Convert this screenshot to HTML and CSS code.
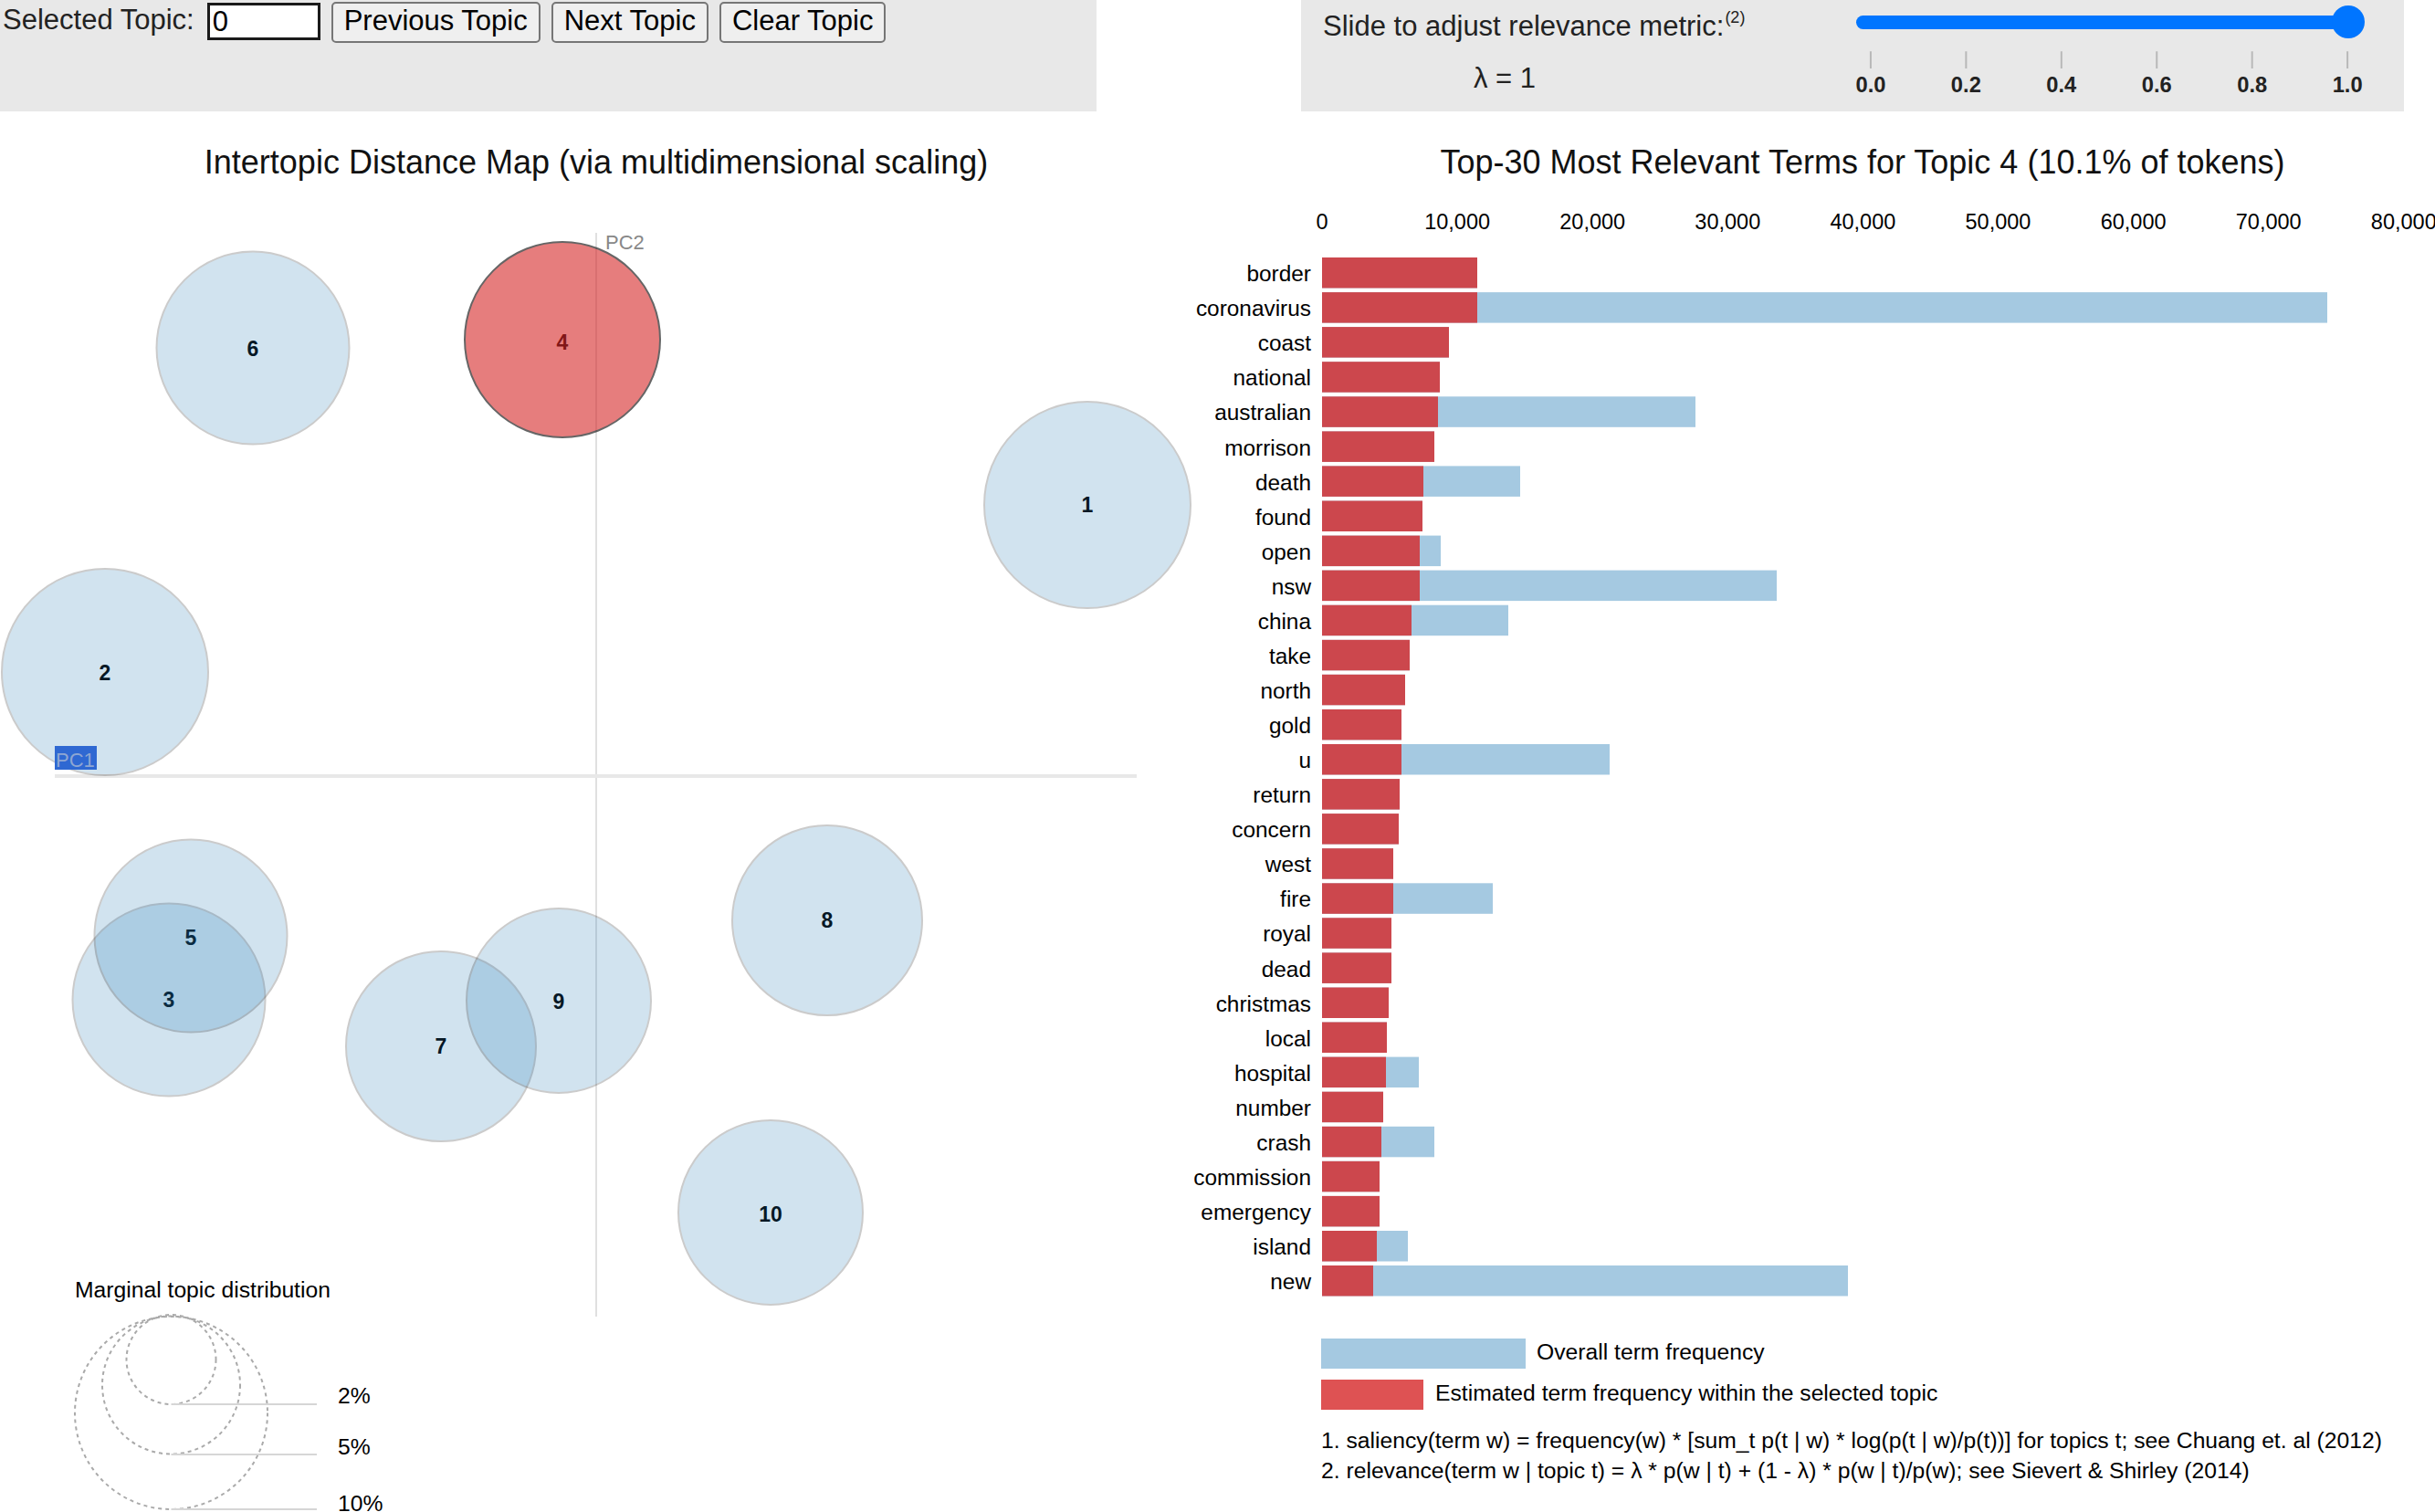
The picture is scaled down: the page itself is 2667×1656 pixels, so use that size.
FILE: index.html
```html
<!DOCTYPE html>
<html lang="en">
<head>
<meta charset="utf-8">
<title>LDAvis</title>
<link rel="stylesheet" href="styles.css">
</head>
<body>
<div class="controls">
  <div class="topic-panel">
    <span class="topic-label">Selected Topic:</span>
    <input class="topic-input" type="text" value="0">
    <button class="btn">Previous Topic</button>
    <button class="btn">Next Topic</button>
    <button class="btn">Clear Topic</button>
  </div>
  <div class="rel-panel">
    <div class="rel-text">
      <div class="rel-label">Slide to adjust relevance metric:<sup>(2)</sup></div>
      <div class="lambda">λ = 1</div>
    </div>
    <div class="slider">
      <div class="track"><div class="thumb"></div></div>
      <svg class="ticks" viewBox="0 0 560 91">
        <g class="tick-lines">
          <line x1="13" y1="24.5" x2="13" y2="43.5"/>
          <line x1="118.6" y1="24.5" x2="118.6" y2="43.5"/>
          <line x1="224.2" y1="24.5" x2="224.2" y2="43.5"/>
          <line x1="329.8" y1="24.5" x2="329.8" y2="43.5"/>
          <line x1="435.4" y1="24.5" x2="435.4" y2="43.5"/>
          <line x1="541" y1="24.5" x2="541" y2="43.5"/>
        </g>
        <g class="tick-text">
          <text x="13" y="70">0.0</text>
          <text x="118.6" y="70">0.2</text>
          <text x="224.2" y="70">0.4</text>
          <text x="329.8" y="70">0.6</text>
          <text x="435.4" y="70">0.8</text>
          <text x="541" y="70">1.0</text>
        </g>
      </svg>
    </div>
  </div>
</div>

<div class="charts">
  <svg class="map" viewBox="0 122 1310 1534">
    <text class="chart-title" x="653" y="190">Intertopic Distance Map (via multidimensional scaling)</text>
    <line class="axis-v" x1="653" y1="255" x2="653" y2="1442"/>
    <line class="axis-h" x1="60" y1="850" x2="1245" y2="850"/>
    <text class="pc" x="663" y="273">PC2</text>

    <g class="tlabels">
      <text x="1191" y="561">1</text>
      <text x="115" y="745">2</text>
      <text x="185" y="1103">3</text>
      <text x="616" y="383">4</text>
      <text x="209" y="1035">5</text>
      <text x="277" y="390">6</text>
      <text x="483" y="1154">7</text>
      <text x="906" y="1016">8</text>
      <text x="612" y="1105">9</text>
      <text x="844" y="1338">10</text>
    </g>
    <g>
      <circle class="topic" cx="1191" cy="553" r="113"/>
      <circle class="topic" cx="115" cy="736" r="113"/>
      <circle class="topic" cx="185" cy="1095" r="105.5"/>
      <circle class="topic sel" cx="616" cy="372" r="107"/>
      <circle class="topic" cx="209" cy="1025" r="105.5"/>
      <circle class="topic" cx="277" cy="381" r="105.5"/>
      <circle class="topic" cx="483" cy="1146" r="104"/>
      <circle class="topic" cx="906" cy="1008" r="104"/>
      <circle class="topic" cx="612" cy="1096" r="101"/>
      <circle class="topic" cx="844" cy="1328" r="101"/>
    </g>
    <rect class="pc1-sel" x="60" y="817" width="46" height="26"/>
    <text class="pc1" x="61" y="840">PC1</text>

    <text class="small" x="82" y="1421">Marginal topic distribution</text>
    <circle class="marg" cx="187.5" cy="1489" r="49"/>
    <circle class="marg" cx="187.5" cy="1517" r="75.5"/>
    <circle class="marg" cx="187.5" cy="1547.5" r="105.5"/>
    <line class="marg-line" x1="187.5" y1="1538" x2="347" y2="1538"/>
    <line class="marg-line" x1="187.5" y1="1593" x2="347" y2="1593"/>
    <line class="marg-line" x1="187.5" y1="1653" x2="347" y2="1653"/>
    <text class="small" x="370" y="1537">2%</text>
    <text class="small" x="370" y="1593">5%</text>
    <text class="small" x="370" y="1655">10%</text>
  </svg>

  <svg class="bars" viewBox="1310 122 1357 1534">
    <text class="chart-title" x="2040" y="190">Top-30 Most Relevant Terms for Topic 4 (10.1% of tokens)</text>
    <g class="xaxis">
      <text x="1448" y="251">0</text>
      <text x="1596.1" y="251">10,000</text>
      <text x="1744.2" y="251">20,000</text>
      <text x="1892.3" y="251">30,000</text>
      <text x="2040.4" y="251">40,000</text>
      <text x="2188.5" y="251">50,000</text>
      <text x="2336.6" y="251">60,000</text>
      <text x="2484.7" y="251">70,000</text>
      <text x="2632.8" y="251">80,000</text>
    </g>

    <g transform="translate(1448,282)"><rect class="ov" width="170" height="33.5"/><rect class="est" width="170" height="33.5"/><text class="term" x="-12" y="26.2">border</text></g>
    <g transform="translate(1448,320.1)"><rect class="ov" width="1101" height="33.5"/><rect class="est" width="170" height="33.5"/><text class="term" x="-12" y="26.2">coronavirus</text></g>
    <g transform="translate(1448,358.1)"><rect class="ov" width="139" height="33.5"/><rect class="est" width="139" height="33.5"/><text class="term" x="-12" y="26.2">coast</text></g>
    <g transform="translate(1448,396.2)"><rect class="ov" width="129" height="33.5"/><rect class="est" width="129" height="33.5"/><text class="term" x="-12" y="26.2">national</text></g>
    <g transform="translate(1448,434.3)"><rect class="ov" width="409" height="33.5"/><rect class="est" width="127" height="33.5"/><text class="term" x="-12" y="26.2">australian</text></g>
    <g transform="translate(1448,472.4)"><rect class="ov" width="123" height="33.5"/><rect class="est" width="123" height="33.5"/><text class="term" x="-12" y="26.2">morrison</text></g>
    <g transform="translate(1448,510.4)"><rect class="ov" width="217" height="33.5"/><rect class="est" width="111" height="33.5"/><text class="term" x="-12" y="26.2">death</text></g>
    <g transform="translate(1448,548.5)"><rect class="ov" width="110" height="33.5"/><rect class="est" width="110" height="33.5"/><text class="term" x="-12" y="26.2">found</text></g>
    <g transform="translate(1448,586.6)"><rect class="ov" width="130" height="33.5"/><rect class="est" width="107" height="33.5"/><text class="term" x="-12" y="26.2">open</text></g>
    <g transform="translate(1448,624.6)"><rect class="ov" width="498" height="33.5"/><rect class="est" width="107" height="33.5"/><text class="term" x="-12" y="26.2">nsw</text></g>
    <g transform="translate(1448,662.7)"><rect class="ov" width="204" height="33.5"/><rect class="est" width="98" height="33.5"/><text class="term" x="-12" y="26.2">china</text></g>
    <g transform="translate(1448,700.8)"><rect class="ov" width="96" height="33.5"/><rect class="est" width="96" height="33.5"/><text class="term" x="-12" y="26.2">take</text></g>
    <g transform="translate(1448,738.8)"><rect class="ov" width="91" height="33.5"/><rect class="est" width="91" height="33.5"/><text class="term" x="-12" y="26.2">north</text></g>
    <g transform="translate(1448,776.9)"><rect class="ov" width="87" height="33.5"/><rect class="est" width="87" height="33.5"/><text class="term" x="-12" y="26.2">gold</text></g>
    <g transform="translate(1448,815)"><rect class="ov" width="315" height="33.5"/><rect class="est" width="87" height="33.5"/><text class="term" x="-12" y="26.2">u</text></g>
    <g transform="translate(1448,853.1)"><rect class="ov" width="85" height="33.5"/><rect class="est" width="85" height="33.5"/><text class="term" x="-12" y="26.2">return</text></g>
    <g transform="translate(1448,891.1)"><rect class="ov" width="84" height="33.5"/><rect class="est" width="84" height="33.5"/><text class="term" x="-12" y="26.2">concern</text></g>
    <g transform="translate(1448,929.2)"><rect class="ov" width="78" height="33.5"/><rect class="est" width="78" height="33.5"/><text class="term" x="-12" y="26.2">west</text></g>
    <g transform="translate(1448,967.3)"><rect class="ov" width="187" height="33.5"/><rect class="est" width="78" height="33.5"/><text class="term" x="-12" y="26.2">fire</text></g>
    <g transform="translate(1448,1005.3)"><rect class="ov" width="76" height="33.5"/><rect class="est" width="76" height="33.5"/><text class="term" x="-12" y="26.2">royal</text></g>
    <g transform="translate(1448,1043.4)"><rect class="ov" width="76" height="33.5"/><rect class="est" width="76" height="33.5"/><text class="term" x="-12" y="26.2">dead</text></g>
    <g transform="translate(1448,1081.5)"><rect class="ov" width="73" height="33.5"/><rect class="est" width="73" height="33.5"/><text class="term" x="-12" y="26.2">christmas</text></g>
    <g transform="translate(1448,1119.5)"><rect class="ov" width="71" height="33.5"/><rect class="est" width="71" height="33.5"/><text class="term" x="-12" y="26.2">local</text></g>
    <g transform="translate(1448,1157.6)"><rect class="ov" width="106" height="33.5"/><rect class="est" width="70" height="33.5"/><text class="term" x="-12" y="26.2">hospital</text></g>
    <g transform="translate(1448,1195.7)"><rect class="ov" width="67" height="33.5"/><rect class="est" width="67" height="33.5"/><text class="term" x="-12" y="26.2">number</text></g>
    <g transform="translate(1448,1233.8)"><rect class="ov" width="123" height="33.5"/><rect class="est" width="65" height="33.5"/><text class="term" x="-12" y="26.2">crash</text></g>
    <g transform="translate(1448,1271.8)"><rect class="ov" width="63" height="33.5"/><rect class="est" width="63" height="33.5"/><text class="term" x="-12" y="26.2">commission</text></g>
    <g transform="translate(1448,1309.9)"><rect class="ov" width="63" height="33.5"/><rect class="est" width="63" height="33.5"/><text class="term" x="-12" y="26.2">emergency</text></g>
    <g transform="translate(1448,1348)"><rect class="ov" width="94" height="33.5"/><rect class="est" width="60" height="33.5"/><text class="term" x="-12" y="26.2">island</text></g>
    <g transform="translate(1448,1386)"><rect class="ov" width="576" height="33.5"/><rect class="est" width="56" height="33.5"/><text class="term" x="-12" y="26.2">new</text></g>

    <rect class="ov" x="1447" y="1466" width="224" height="33"/>
    <text class="small" x="1683" y="1489">Overall term frequency</text>
    <rect class="est" x="1447" y="1511" width="112" height="33"/>
    <text class="small" x="1572" y="1534">Estimated term frequency within the selected topic</text>
    <text class="small" x="1447" y="1586">1. saliency(term w) = frequency(w) * [sum_t p(t | w) * log(p(t | w)/p(t))] for topics t; see Chuang et. al (2012)</text>
    <text class="small" x="1447" y="1619">2. relevance(term w | topic t) = λ * p(w | t) + (1 - λ) * p(w | t)/p(w); see Sievert &amp; Shirley (2014)</text>
  </svg>
</div>
</body>
</html>
```

FILE: styles.css
```css
html, body {
  margin: 0;
  padding: 0;
  background: #ffffff;
}
body {
  width: 2667px;
  height: 1656px;
  overflow: hidden;
  font-family: "Liberation Sans", Arial, sans-serif;
  color: #000;
}

/* ---------- top controls ---------- */
.controls {
  display: flex;
  gap: 224px;
  height: 122px;
}
.topic-panel {
  width: 1201px;
  height: 122px;
  box-sizing: border-box;
  background: #e8e8e8;
  display: flex;
  align-items: flex-start;
  gap: 12px;
  padding-left: 3px;
}
.topic-label {
  font-size: 31px;
  line-height: 34px;
  margin-top: 5px;
  color: #222;
  white-space: nowrap;
}
.topic-input {
  width: 124px;
  height: 41px;
  box-sizing: border-box;
  margin: 3px 0 0 2px;
  border: 3px solid #1a1a1a;
  padding: 0 3px;
  background: #fff;
  font-family: "Liberation Sans", Arial, sans-serif;
  font-size: 31px;
  color: #000;
  outline: none;
}
.btn {
  height: 45px;
  box-sizing: border-box;
  margin-top: 2px;
  padding: 0 12px 4px;
  border: 2px solid #767676;
  border-radius: 5px;
  background: #efefef;
  font-family: "Liberation Sans", Arial, sans-serif;
  font-size: 31px;
  line-height: 37px;
  color: #000;
  white-space: nowrap;
}

.rel-panel {
  width: 1208px;
  height: 122px;
  box-sizing: border-box;
  background: #e8e8e8;
  display: flex;
  padding-left: 24px;
}
.rel-text {
  width: 584px;
  flex: none;
}
.rel-label {
  font-size: 31px;
  line-height: 34px;
  margin-top: 12px;
  color: #222;
  white-space: nowrap;
}
.rel-label sup {
  font-size: 18px;
  line-height: 0;
  vertical-align: 14px;
  margin-left: 1px;
}
.lambda {
  font-size: 31px;
  line-height: 34px;
  margin-top: 23px;
  padding-left: 165px;
  color: #222;
}
.slider {
  width: 560px;
  flex: none;
  padding-top: 16.5px;
}
.track {
  position: relative;
  width: 552px;
  height: 15px;
  border-radius: 7.5px;
  background: #0075ff;
}
.thumb {
  position: absolute;
  left: 521px;
  top: -10.5px;
  width: 36px;
  height: 36px;
  border-radius: 50%;
  background: #0075ff;
}
.ticks {
  display: block;
  width: 560px;
  height: 90px;
  overflow: visible;
}
.tick-lines line {
  stroke: #b8b8b8;
  stroke-width: 2;
}
.tick-text text {
  font-family: "Liberation Sans", Arial, sans-serif;
  font-size: 24px;
  font-weight: bold;
  text-anchor: middle;
  fill: #222;
}

/* ---------- charts ---------- */
.charts {
  display: flex;
}
.map {
  display: block;
  width: 1310px;
  height: 1534px;
  overflow: visible;
}
.bars {
  display: block;
  width: 1357px;
  height: 1534px;
  overflow: visible;
}
svg text {
  font-family: "Liberation Sans", Arial, sans-serif;
}
.chart-title {
  font-size: 36px;
  text-anchor: middle;
  fill: #111;
}
.axis-v {
  stroke: #e0e0e0;
  stroke-width: 2;
}
.axis-h {
  stroke: #e8e8e8;
  stroke-width: 4;
}
.pc {
  font-size: 22px;
  fill: #888;
}
.pc1-sel {
  fill: #2f68d2;
}
.pc1 {
  font-size: 22px;
  fill: #8ea6d2;
}
.tlabels text {
  font-size: 23px;
  font-weight: bold;
  text-anchor: middle;
  fill: #000;
}
.topic {
  fill: #1f77b4;
  stroke: #000;
  stroke-width: 2;
  opacity: 0.2;
}
.topic.sel {
  fill: #d62728;
  opacity: 0.6;
}
.small {
  font-size: 24.7px;
  fill: #000;
}
.marg {
  fill: none;
  stroke: #aaa;
  stroke-width: 2;
  stroke-dasharray: 4 4;
}
.marg-line {
  stroke: #d6d6d6;
  stroke-width: 2;
}
.xaxis text {
  font-size: 23.5px;
  text-anchor: middle;
  fill: #000;
}
.ov {
  fill: #1f77b4;
  opacity: 0.4;
}
.est {
  fill: #d62728;
  opacity: 0.8;
}
.term {
  font-size: 24.4px;
  text-anchor: end;
  fill: #000;
}
```
